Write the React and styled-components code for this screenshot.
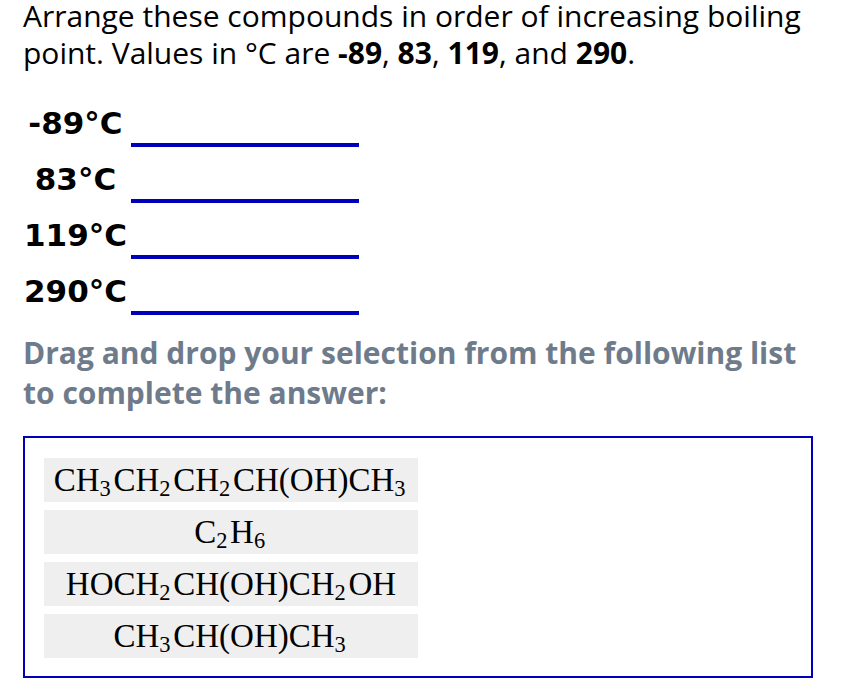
import React from 'react';
import styled, { createGlobalStyle } from 'styled-components';

const GlobalStyle = createGlobalStyle`
  body {
    margin: 0;
    background: #ffffff;
  }
`;

const BLUE = '#0000bb';

const answers = ['-89°C', '83°C', '119°C', '290°C'];

// each formula is a list of [text, subscript]
const choices = [
  [['CH', 3], ['CH', 2], ['CH', 2], ['CH(OH)CH', 3]],
  [['C', 2], ['H', 6]],
  [['HOCH', 2], ['CH(OH)CH', 2], ['OH', null]],
  [['CH', 3], ['CH(OH)CH', 3]],
];

const Formula = ({ parts }) => (
  <FormulaText>
    {parts.map(([text, sub], i) => (
      <React.Fragment key={i}>
        {text}
        {sub && <Sub>{sub}</Sub>}
      </React.Fragment>
    ))}
  </FormulaText>
);

const App = () => (
  <Page>
    <GlobalStyle />
    <Prompt>
      Arrange these compounds in order of increasing boiling point. Values in °C are{' '}
      <b>-89</b>, <b>83</b>, <b>119</b>, and <b>290</b>.
    </Prompt>
    <AnswerList>
      {answers.map(label => (
        <AnswerRow key={label}>
          <Label>{label}</Label>
          <Blank />
        </AnswerRow>
      ))}
    </AnswerList>
    <Instruction>
      Drag and drop your selection from the following list to complete the answer:
    </Instruction>
    <ChoiceBox>
      {choices.map((parts, i) => (
        <Choice key={i}>
          <Formula parts={parts} />
        </Choice>
      ))}
    </ChoiceBox>
  </Page>
);

const Page = styled.div`
  padding: 0 29px 0 23px;
  width: 790px;
`;

const Prompt = styled.p`
  margin: -3px 0 0;
  font-family: 'Open Sans', sans-serif;
  font-size: 30px;
  line-height: 37px;
  color: #000;

  b {
    font-weight: 700;
  }
`;

const AnswerList = styled.div`
  display: flex;
  flex-direction: column;
  margin-top: 20px;
`;

const AnswerRow = styled.div`
  display: flex;
  align-items: flex-end;
`;

const Label = styled.div`
  width: 105px;
  margin-right: 3px;
  padding-bottom: 6px;
  text-align: center;
  font-family: 'DejaVu Sans', Verdana, sans-serif;
  font-weight: 700;
  font-size: 31px;
  line-height: 36px;
  color: #000;
`;

const Blank = styled.div`
  width: 228px;
  height: 52px;
  border-bottom: 4px solid ${BLUE};
`;

const Instruction = styled.p`
  margin: 18px 0 0;
  font-family: 'Open Sans', sans-serif;
  font-weight: 700;
  font-size: 30px;
  line-height: 40px;
  color: #6e7b8b;
`;

const ChoiceBox = styled.div`
  margin-top: 23px;
  border: 2px solid ${BLUE};
  padding: 20px 19px 18px;
  display: flex;
  flex-direction: column;
  gap: 8px;
`;

const Choice = styled.div`
  width: 374px;
  height: 44px;
  background: #efefef;
  display: flex;
  align-items: center;
  justify-content: center;
`;

const FormulaText = styled.span`
  font-family: 'Liberation Serif', 'Times New Roman', serif;
  font-size: 33px;
  line-height: 40px;
  color: #000;
  white-space: nowrap;
`;

const Sub = styled.span`
  font-size: 0.68em;
  vertical-align: -0.22em;
  margin-right: 0.12em;
  line-height: 0;
`;

export default App;
